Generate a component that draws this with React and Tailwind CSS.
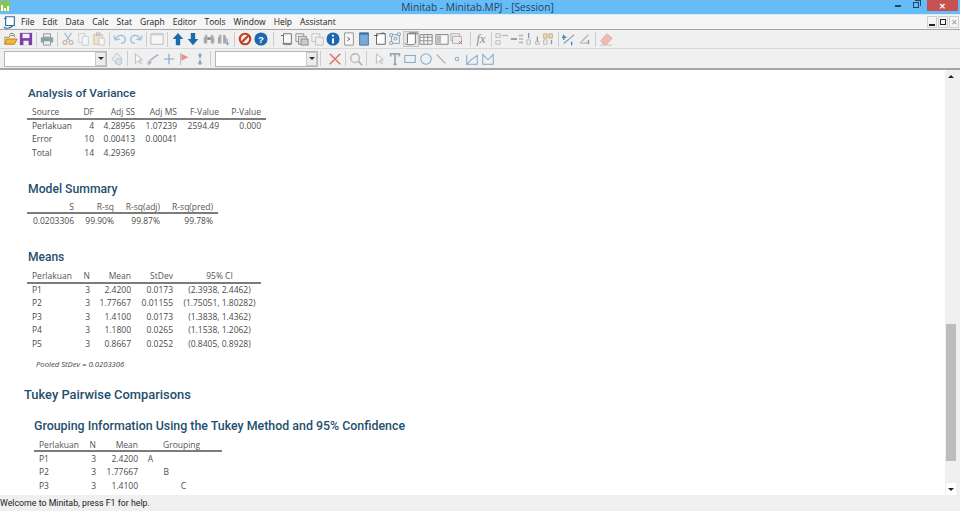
import React from "react";

const S = ({ w = 16, children }) => (
  <svg width="14" height="14" viewBox={`0 0 ${w} 16`} fill="none" className="shrink-0">{children}</svg>
);
const Sep = ({ cls = "" }) => <div className={`w-[1px] h-[15px] bg-[#cdcdcd] mx-[2.25px] shrink-0 ${cls}`} />;
const I = {
  open: <S><path d="M1 14V6h5l1-2h5v2" stroke="#b57f1c" /><path d="M1 14l2-6h12l-3 6z" fill="#f1b53c" stroke="#b57f1c" /><path d="M6 3c2-2 4-2 6 0" stroke="#3f78b5" /></S>,
  save: <S><path d="M1 1h14v14H1z" fill="#7a3fa6" /><path d="M4 2h8v5H4z" fill="#f2eef6" /><path d="M5 10h6v5H5z" fill="#f2eef6" /></S>,
  print: <S><path d="M4 2h8v4H4z" fill="#e8e8e8" stroke="#7f9899" /><path d="M1 6h14v6H1z" fill="#8aa2a1" /><path d="M4 10h8v5H4z" fill="#eee" stroke="#7f9899" /></S>,
  cut: <S><path d="M4 1l6 9M12 1L6 10" stroke="#a9bdcb" strokeWidth="1.500" /><circle cx="4.500" cy="12" r="2.200" stroke="#d4b3a1" strokeWidth="1.400" /><circle cx="11.500" cy="12" r="2.200" stroke="#d4b3a1" strokeWidth="1.400" /></S>,
  copy: <S><path d="M2 2h7v10H2z" fill="#f5f5f5" stroke="#c3ccd4" /><path d="M6 5h7v10H6z" fill="#f5f5f5" stroke="#c3ccd4" /></S>,
  paste: <S><path d="M2 3h10v11H2z" fill="#eee2cb" stroke="#d2c09c" /><path d="M5 1h4v3H5z" fill="#ddd" stroke="#b5b5b5" /><path d="M8 7h6v8H8z" fill="#f7f7f7" stroke="#c5c5c5" /></S>,
  undo: <S><path d="M3 8c3-6 10-5 11 0 0 3-2 5-5 5" stroke="#9dbcdc" strokeWidth="1.500" /><path d="M1 4l1.500 5 5-1" stroke="#9dbcdc" strokeWidth="1.500" /></S>,
  redo: <S><path d="M13 8c-3-6-10-5-11 0 0 3 2 5 5 5" stroke="#9dbcdc" strokeWidth="1.500" /><path d="M15 4l-1.500 5-5-1" stroke="#9dbcdc" strokeWidth="1.500" /></S>,
  win: <S><path d="M1 2h14v12H1z" fill="#f7f7f7" stroke="#b5b5b5" /><path d="M1 2h14v2H1z" fill="#d2d2d2" /></S>,
  up: <S><path d="M8 1l6 7h-3.500v7h-5V8H2z" fill="#1c6aa8" /></S>,
  down: <S><path d="M8 15l6-7h-3.500V1h-5v7H2z" fill="#1c6aa8" /></S>,
  bin: <S><path d="M2 13V7l2-4h2v10zM14 13V7l-2-4h-2v10z" fill="#a9a9a9" /><path d="M6 6h4v3H6z" fill="#8a8a8a" /></S>,
  bin2: <S><path d="M1 13V7l2-4h2v10zM11 13V7L9 3H7v10z" fill="#a9a9a9" /><path d="M12 8v7M10 12l2 3 2-3" stroke="#7ea4c9" /></S>,
  stop: <S><circle cx="8" cy="8" r="6" stroke="#c1401e" strokeWidth="2.400" /><path d="M4 12l8-8" stroke="#c1401e" strokeWidth="2.400" /></S>,
  help: <S><circle cx="8" cy="8" r="7.500" fill="#1f66b0" /><text x="8" y="12" fontSize="11" fontWeight="700" fill="#fff" textAnchor="middle" fontFamily="Liberation Sans">?</text></S>,
  bar1: <S><path d="M1 4h4" stroke="#555" /><path d="M4 2h9v11H4z" fill="#f8f8f8" stroke="#666" /><path d="M3 13c0 2 10 2 11 0" stroke="#666" /></S>,
  stack: <S><path d="M1 2h9v9H1z" fill="#eee" stroke="#888" /><path d="M4 5h9v9H4z" fill="#ddd" stroke="#888" /><path d="M7 8h8v7H7z" fill="#ccc" stroke="#888" /></S>,
  stack2: <S><path d="M1 2h9v9H1z" fill="#f2f2f2" stroke="#bbb" /><path d="M5 6h9v9H5z" fill="#eee" stroke="#bbb" /></S>,
  info: <S><circle cx="8" cy="8" r="7.500" fill="#1f66b0" /><path d="M8 3v2M8 7v6" stroke="#fff" strokeWidth="2.200" /></S>,
  prompt: <S><path d="M3 1h10v14H3z" fill="#f8f8f8" stroke="#8a8a8a" /><path d="M6 6l3 2-3 2" stroke="#555" /></S>,
  blue: <S><path d="M3 1h10v14H3z" fill="#79a9d6" stroke="#3c6f9f" /><path d="M3 1h10v2H3z" fill="#3c6f9f" /></S>,
  page: <S><path d="M1 4h5M4 2h10v12H4z" stroke="#555" fill="#fff" /><path d="M9 2l2-1 3 1" stroke="#555" /></S>,
  nodes: <S><path d="M4 3h9v10H4z" stroke="#7d9bb4" /><path d="M2 2h3v3H2zM11 1h3v3h-3zM2 11h3v3H2zM7 6h3v3H7z" fill="#fff" stroke="#7d9bb4" /></S>,
  active: <S><path d="M1 13c2 2 11 2 12 0V2H4v11" fill="#fff" stroke="#666" /><path d="M6 1h9v2" stroke="#666" /></S>,
  grid: <S><path d="M1 3h14v11H1z" fill="#f8f8f8" stroke="#777" /><path d="M1 6h14M1 10h14M5.500 3v11M10 3v11" stroke="#888" /></S>,
  panel: <S><path d="M1 3h14v11H1z" fill="#f8f8f8" stroke="#777" /><path d="M2 4h5v9H2z" fill="#bbb" /></S>,
  pagex: <S><path d="M1 2h10v8H1z" fill="#eee" stroke="#aaa" /><path d="M3 5h10v8H3z" fill="#eee" stroke="#aaa" /><path d="M10 10l4 4M14 10l-4 4" stroke="#d66" /></S>,
  fx: <S><text x="8" y="13" fontSize="14" fontStyle="italic" fill="#8a8a8a" textAnchor="middle" fontFamily="Liberation Serif">fx</text></S>,
  t1: <S><path d="M1 2h5v4H1zM1 10h5v4H1z" stroke="#b5b5b5" /><path d="M8 4h7" stroke="#a5c0d4" strokeWidth="1.500" /></S>,
  t2: <S><path d="M1 8h7" stroke="#7d9bb4" strokeWidth="2" /><path d="M10 4h5M10 8h5M10 12h5" stroke="#b5b5b5" strokeWidth="1.500" /></S>,
  t3: <S><path d="M3 1v6M13 5v6" stroke="#7d9bb4" strokeWidth="1.500" /><path d="M1 9h4v5H1zM11 11h4v3h-4z" stroke="#b5b5b5" /></S>,
  t4: <S><path d="M3 2h4v5H3zM9 2h4v5H9z" fill="#ead9b6" stroke="#c4ac7d" /><path d="M3 9h4v5H3z" stroke="#b5b5b5" /><path d="M12 9v5" stroke="#7d9bb4" strokeWidth="1.500" /></S>,
  w1: <S><path d="M2 13l5-4 7-6" stroke="#8fa9bf" strokeWidth="1.500" /><path d="M2 3v6M5 6H-1M11 11v4" stroke="#3b87b4" strokeWidth="1.500" /></S>,
  w2: <S><path d="M2 13l5-5 5-5" stroke="#b5b5b5" strokeWidth="1.500" /><path d="M4 13l8-1" stroke="#a9bfd0" strokeWidth="1.500" /><path d="M12 9v5" stroke="#7d9bb4" strokeWidth="1.500" /></S>,
  eraser: <S><path d="M2 10l7-8 6 5-6 7H5z" fill="#f3b9b4" stroke="#dcaaa5" /><path d="M1 15h14" stroke="#c5c5c5" /></S>,
  globe: <S><path d="M8 1L2 8l6 6 6-6z" fill="#e9e9e9" stroke="#b0bfcb" /><circle cx="10" cy="11" r="3.500" fill="#d9e3eb" stroke="#b0bfcb" /></S>,
  arrow: <S><path d="M5 2v11l3-3 3 4 1-1-2.500-4H13z" fill="#f8f8f8" stroke="#b5b5b5" /></S>,
  brush: <S><path d="M2 13c2-3 7-7 12-10" stroke="#9db5ce" strokeWidth="1.800" /><path d="M2 14c2 0 3-1 4-3" stroke="#d9aca1" strokeWidth="2" /></S>,
  plus: <S><path d="M8 2v12M2 8h12" stroke="#7aa6cc" strokeWidth="1.300" /></S>,
  flag: <S><path d="M4 1v14" stroke="#b5b5b5" /><path d="M5 2l8 4-8 4z" fill="#e8918a" /></S>,
  swap: <S><path d="M8 1l3 3H9v3H7V4H5zM8 15l3-3H9V9H7v3H5z" fill="#8ea3b3" /></S>,
  x: <S><path d="M2 2l12 12M14 2L2 14" stroke="#dd7a67" strokeWidth="1.800" /></S>,
  mag: <S><circle cx="7" cy="7" r="5" stroke="#b5b5b5" strokeWidth="1.500" /><path d="M10.500 10.500L15 15" stroke="#b5b5b5" strokeWidth="2" /></S>,
  T: <S><path d="M3 5V2h10v3M8 2v12M6 14h4" stroke="#9aa7b1" strokeWidth="2" /></S>,
  rect: <S><path d="M2 4h12v8H2z" stroke="#82abcf" strokeWidth="1.200" /></S>,
  circle: <S><circle cx="8" cy="8" r="6" stroke="#82abcf" strokeWidth="1.200" /></S>,
  line: <S><path d="M3 3l10 10" stroke="#9aa7b1" strokeWidth="1.200" /></S>,
  dot: <S><circle cx="8" cy="8" r="2" stroke="#82abcf" strokeWidth="1.200" /></S>,
  poly: <S><path d="M2 14V3M2 14h12V4L7 9z" stroke="#82abcf" strokeWidth="1.200" /></S>,
  poly2: <S><path d="M2 14V3l6 6 6-6v11z" stroke="#82abcf" strokeWidth="1.200" /></S>,
};

const Slot = ({ k, active }) => (
  <div className={`w-[15.500px] h-[16px] shrink-0 flex items-center justify-center ${active ? "bg-[#e4e4e4] border border-[#c4c4c4]" : ""}`}>{I[k]}</div>
);

const Combo = ({ w }) => (
  <div className={`${w} h-[16px] bg-white border border-[#b5b5b5] flex justify-end items-center shrink-0`}>
    <div className="w-[11px] h-[14px] bg-[#ececec] border border-[#c9c9c9] flex items-center justify-center">
      <div className="w-0 h-0 border-x-[3px] border-x-transparent border-t-[3px] border-t-[#333]" />
    </div>
  </div>
);

const Row = ({ cols, cells, header, left }) => (
  <div className={`grid items-center leading-none ${header ? "h-[11px] text-[#555]" : "h-[13.400px] text-[#4a4a4a]"}`} style={{ gridTemplateColumns: cols }}>
    {cells.map((c, k) => (
      <div key={k} className={typeof c === "object" ? c.cls : k === 0 && !left ? "text-left" : "text-right"}>
        {typeof c === "object" ? c.t : c}
      </div>
    ))}
  </div>
);

const Table = ({ cols, width, head, rows, left = false }) => (
  <div className="text-[8.500px]" style={{ width }}>
    <div className="px-[5px] border-b-2 border-[#7c7c7c]">
      <Row cols={cols} cells={head} header left={left} />
    </div>
    <div className="px-[5px]">
      {rows.map((r, i) => (
        <Row key={i} cols={cols} cells={r} left={left} />
      ))}
    </div>
  </div>
);

const H = ({ children, cls }) => (
  <div className={`font-medium text-[#1f4f6e] leading-none whitespace-nowrap ${cls}`} style={{ fontFamily: 'Roboto, "Open Sans", sans-serif' }}>{children}</div>
);

const Menu = ["File", "Edit", "Data", "Calc", "Stat", "Graph", "Editor", "Tools", "Window", "Help", "Assistant"];
const CI = "text-center pl-[10px]";

export default function App() {
  const c = { t: "", cls: "" };
  return (
    <div className="w-[960px] h-[511px] overflow-hidden flex flex-col bg-[#f0f0f0] text-[#333]" style={{ fontFamily: '"Open Sans", "Noto Sans", sans-serif' }}>
      <div className="h-[14px] bg-[#66bcf6] flex items-center shrink-0">
        <div className="flex-1">
          <div className="w-[10px] h-[10px] bg-[#8cc44c] flex items-end gap-[1px] px-[1px] mb-[3px]">
            <div className="w-[2px] h-[6px] bg-white" /><div className="w-[2px] h-[3px] bg-white" /><div className="w-[2px] h-[5px] bg-white" />
          </div>
        </div>
        <div className="text-[10.200px] text-[#26445c] leading-none w-[160px] text-center whitespace-nowrap ml-[-3px]">Minitab - Minitab.MPJ - [Session]</div>
        <div className="flex-1 flex justify-end items-start h-full pr-[2px]">
          <div className="w-[6px] h-[2px] bg-[#24455f] mt-[5px] mr-[12px]" />
          <div className="relative w-[6px] h-[6px] border border-[#24455f] mt-[2px] mr-[8px]">
            <div className="absolute w-[6px] h-[6px] border-t border-r border-[#24455f] left-[1px] top-[-3px]" />
          </div>
          <div className="w-[31px] h-[11px] bg-[#c75050] flex items-center justify-center text-white text-[8px] font-bold leading-none">✕</div>
        </div>
      </div>
      <div className="h-[16px] border-t border-[#dfe9f0] bg-[#f5f5f5] flex items-center shrink-0 border-b border-b-[#a6a6a6]">
        <div className="w-[21px] pl-[3px] flex"><S><path d="M1 4h3M3 2h10v10H3z" stroke="#2c6f9f" fill="#fff" strokeWidth="1.300" /><path d="M1 14c2 2 9 1 10-2" stroke="#2c6f9f" strokeWidth="1.300" /></S></div>
        <div className="flex gap-[8px] text-[8.500px] leading-none text-[#222]">
          {Menu.map((m) => <span key={m}>{m}</span>)}
        </div>
        <div className="ml-auto flex h-[12px] items-stretch gap-[1px] mr-[1px] text-[#333]">
          <div className="w-[10px] border border-[#cfcfcf] flex items-end justify-center pb-[1px]"><div className="w-[6px] h-[2px] bg-[#222]" /></div>
          <div className="w-[10px] border border-[#cfcfcf] flex items-center justify-center"><div className="w-[6px] h-[6px] border border-[#222]" /></div>
          <div className="w-[10px] border border-[#cfcfcf] flex items-center justify-center text-[8px] leading-none text-[#999]">✕</div>
        </div>
      </div>
      <div className="h-[19px] flex items-center pl-[3px] shrink-0 border-b border-[#d8d8d8]">
        {["open","save","|","print","|","cut","copy","paste","|","undo","redo","|","win","|","up","down","bin","bin2","|","stop","help","_","|","_","bar1","stack","stack2","info","prompt","blue","page","nodes","active","grid","panel","pagex","_","|","fx","|","t1","t2","t3","t4","|","w1","w2","|","eraser"].map((k, i) =>
          k === "|" ? <Sep key={i} /> : k === "_" ? <div key={i} className="w-[2.500px] shrink-0" /> : <Slot key={i} k={k} active={k === "active"} />
        )}
      </div>
      <div className="h-[19px] flex items-center pl-[4px] shrink-0 border-b-2 border-[#a5a5a5] box-content">
        <Combo w="w-[103px]" />
        <div className="w-[2px] shrink-0" />
        <Slot k="globe" />
        <Sep />
        {["arrow","brush","plus","flag","swap"].map((k) => <Slot key={k} k={k} />)}
        <Sep />
        <div className="w-[2px] shrink-0" />
        <Combo w="w-[103px]" />
        <Sep />
        <div className="w-[4px] shrink-0" />
        <Slot k="x" />
        <Sep />
        <Slot k="mag" />
        <Sep />
        <div className="w-[2px] shrink-0" />
        {["arrow","T","rect","circle","line","dot","poly","poly2"].map((k) => <Slot key={k} k={k} />)}
      </div>

      <div className="flex-1 min-h-0 flex pr-[3px]">
        <div className="flex-1 min-w-0 overflow-hidden bg-white pl-[27px] pt-[17.500px]">
          <H cls="text-[11.800px] h-[12px] mb-[7px] ml-[1px]">Analysis of Variance</H>
          <Table width="239px" cols="45px 17px 41px 42px 42px 42px"
            head={["Source","DF","Adj SS","Adj MS","F-Value","P-Value"]}
            rows={[["Perlakuan","4","4.28956","1.07239","2594.49","0.000"],["Error","10","0.00413","0.00041","",""],["Total","14","4.29369","","",""]]} />
          <H cls="text-[12.200px] h-[12px] mt-[23px] mb-[6.600px] ml-[1px]">Model Summary</H>
          <Table width="191px" cols="42px 40px 46px 53px" left
            head={[{t:"S",cls:"text-right"},{t:"R-sq",cls:"text-right"},{t:"R-sq(adj)",cls:"text-right"},{t:"R-sq(pred)",cls:"text-right"}]}
            rows={[[{t:"0.0203306",cls:"text-right"},{t:"99.90%",cls:"text-right"},{t:"99.87%",cls:"text-right"},{t:"99.78%",cls:"text-right"}]]} />
          <H cls="text-[12px] h-[12px] mt-[23px] mb-[8px] ml-[1px]">Means</H>
          <Table width="234px" cols="45px 13px 41px 42px 83px"
            head={["Perlakuan","N","Mean","StDev",{t:"95% CI",cls:CI}]}
            rows={[
              ["P1","3","2.4200","0.0173",{t:"(2.3938, 2.4462)",cls:CI}],
              ["P2","3","1.77667","0.01155",{t:"(1.75051, 1.80282)",cls:CI}],
              ["P3","3","1.4100","0.0173",{t:"(1.3838, 1.4362)",cls:CI}],
              ["P4","3","1.1800","0.0265",{t:"(1.1538, 1.2062)",cls:CI}],
              ["P5","3","0.8667","0.0252",{t:"(0.8405, 0.8928)",cls:CI}],
            ]} />
          <div className="text-[7.700px] h-[8px] italic text-[#444] ml-[9px] mt-[10.500px] leading-none">Pooled StDev = 0.0203306</div>
          <H cls="text-[12.900px] h-[13.500px] mt-[20px] ml-[-3px]">Tukey Pairwise Comparisons</H>
          <H cls="text-[12.400px] h-[12.500px] mt-[17px] ml-[7px] mb-[7.300px]">Grouping Information Using the Tukey Method and 95% Confidence</H>
          <div className="ml-[7px]">
            <Table width="188px" cols="44px 13px 42px 15px 16px 17px 31px"
              head={["Perlakuan","N","Mean",{t:"Grouping",cls:"col-span-4 text-left pl-[25px]"}]}
              rows={[
                ["P1","3","2.4200",{t:"A",cls:"text-right"},c,c,c],
                ["P2","3","1.77667",c,{t:"B",cls:"text-right"},c,c],
                ["P3","3","1.4100",c,c,{t:"C",cls:"text-right"},c],
              ]} />
          </div>
        </div>
        <div className="w-[12px] shrink-0 bg-[#f0f0f0] flex flex-col items-center px-[1px]">
          <div className="h-[12px] flex items-center justify-center shrink-0">
            <div className="w-0 h-0 border-x-[3px] border-x-transparent border-b-[3px] border-b-[#222]" />
          </div>
          <div className="w-full h-[242px] shrink-0" />
          <div className="w-full h-[137px] bg-[#bdbdbd] shrink-0" />
          <div className="flex-1" />
          <div className="h-[12px] w-full flex items-center justify-center bg-white shrink-0">
            <div className="w-0 h-0 border-x-[3px] border-x-transparent border-t-[3px] border-t-[#222]" />
          </div>
        </div>
      </div>
      <div className="h-[16px] shrink-0 flex items-center text-[8.800px] text-[#222] leading-none" style={{ fontFamily: 'Roboto, sans-serif' }}>Welcome to Minitab, press F1 for help.</div>
    </div>
  );
}
